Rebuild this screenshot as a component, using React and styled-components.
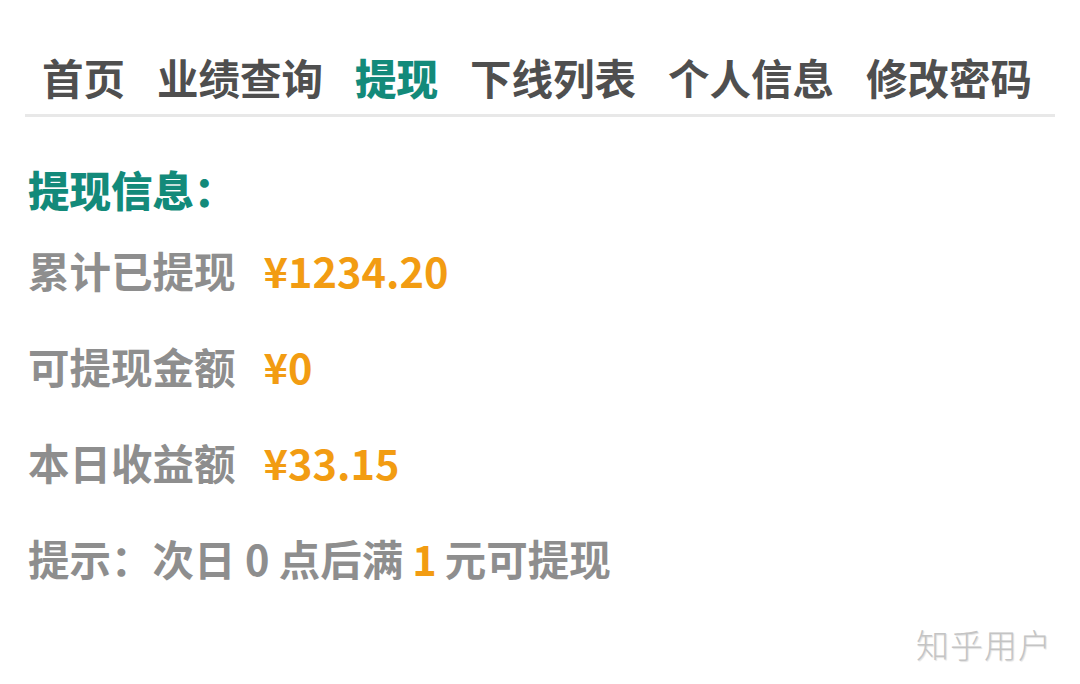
import React from "react";
import styled, { createGlobalStyle } from "styled-components";

const Global = createGlobalStyle`
  html, body { margin: 0; padding: 0; background: #fff; }
  body { font-family: "Noto Sans CJK SC", "Noto Sans", sans-serif; }
`;

const Page = styled.div`
  position: relative;
  width: 1080px;
  height: 684px;
  box-sizing: border-box;
  padding: 0 25px;
  overflow: hidden;
`;

const Nav = styled.nav`
  display: flex;
  gap: 32px;
  padding: 57px 0 16px 17px;
  border-bottom: 3px solid #e8e8e8;
`;

const NavItem = styled.a`
  font-size: 41.5px;
  line-height: 41px;
  font-weight: ${(p) => (p.$active ? 900 : 700)};
  color: ${(p) => (p.$active ? "#138a7a" : "#4f4f4f")};
  text-decoration: none;
  white-space: nowrap;
`;

const Content = styled.section`
  display: flex;
  flex-direction: column;
  padding: 52px 0 0 3px;
`;

const Title = styled.h2`
  margin: 0 0 40px;
  font-size: 41.5px;
  line-height: 41px;
  font-weight: 900;
  color: #138a7a;
`;

const Row = styled.div`
  display: flex;
  align-items: center;
  font-size: 41.5px;
  line-height: 41px;
  font-weight: 700;
  color: #8e8e8e;
  margin-bottom: 55px;
  white-space: pre;
`;

const Value = styled.span`
  color: #f29c12;
  font-weight: 700;
  margin-left: 28px;
`;

const Hl = styled.span`
  color: #f29c12;
  margin: 0 8px 0 9px;
`;

const Watermark = styled.div`
  position: absolute;
  right: 28px;
  top: 624px;
  font-size: 33px;
  line-height: 40px;
  font-weight: 300;
  color: #c4c4c4;
  text-shadow: 1px 1px 1px rgba(0, 0, 0, 0.12);
  letter-spacing: 1px;
`;

const navItems = ["首页", "业绩查询", "提现", "下线列表", "个人信息", "修改密码"];

const rows = [
  ["累计已提现", "1234.20"],
  ["可提现金额", "0"],
  ["本日收益额", "33.15"],
];

export default function App() {
  return (
    <>
      <Global />
      <Page>
        <Nav>
          {navItems.map((n) => (
            <NavItem key={n} $active={n === "提现"}>
              {n}
            </NavItem>
          ))}
        </Nav>
        <Content>
          <Title>提现信息：</Title>
          {rows.map(([label, amount]) => (
            <Row key={label}>
              {label}
              <Value>{"¥" + amount}</Value>
            </Row>
          ))}
          <Row>
            {"提示：次日 0 点后满"}
            <Hl>1</Hl>
            {"元可提现"}
          </Row>
        </Content>
        <Watermark>知乎用户</Watermark>
      </Page>
    </>
  );
}
